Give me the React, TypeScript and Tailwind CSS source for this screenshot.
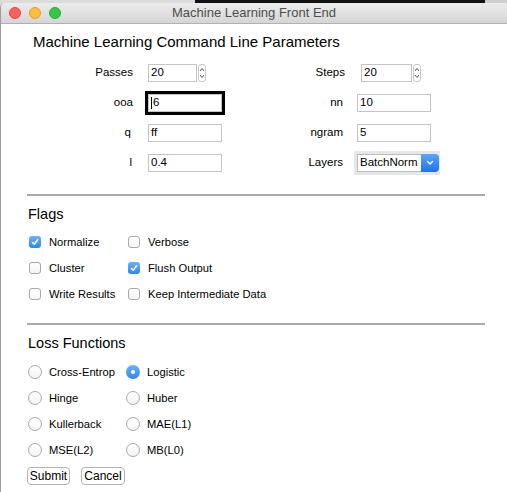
import React from 'react';

const Spinner = () => (
  <div className="ml-px flex h-[18px] w-[8px] items-center justify-center rounded-[3px] border border-[#c8c8c8] bg-white">
    <svg width="6" height="14" viewBox="0 0 6 14" fill="none" stroke="#555" strokeWidth="1">
      <path d="M1 5 L3 2.5 L5 5" />
      <path d="M1 9 L3 11.5 L5 9" />
    </svg>
  </div>
);

const Field = ({ value, w, focused, cursor }: { value: string; w: string; focused?: boolean; cursor?: boolean }) => (
  <div
    className={`flex h-[18px] items-center border border-[#c4c4c4] bg-white pl-[2px] text-[11.5px] leading-none text-black ${w} ${
      focused ? 'shadow-[0_0_0_3px_#000]' : ''
    }`}
  >
    {cursor && <span className="mr-px inline-block h-[12px] w-px bg-black" />}
    {value}
  </div>
);

const Checkbox = ({ checked, label }: { checked?: boolean; label: string }) => (
  <div className="flex h-[26px] items-center gap-[8px]">
    {checked ? (
      <div className="flex h-[12px] w-[12px] items-center justify-center rounded-[3px] bg-gradient-to-b from-[#6cb0fb] to-[#2c84f6]">
        <svg width="10" height="10" viewBox="0 0 10 10" fill="none" stroke="#fff" strokeWidth="1.6" strokeLinecap="round" strokeLinejoin="round">
          <path d="M2.5 5.5 L4.3 7.3 L7.6 2.8" />
        </svg>
      </div>
    ) : (
      <div className="h-[12px] w-[12px] rounded-[3px] border border-[#a9a9a9] bg-gradient-to-b from-white to-[#f4f4f4]" />
    )}
    <span className="text-[11.2px] text-black">{label}</span>
  </div>
);

const Radio = ({ checked, label }: { checked?: boolean; label: string }) => (
  <div className="flex h-[26px] items-center gap-[7px]">
    {checked ? (
      <div className="flex h-[14px] w-[14px] items-center justify-center rounded-full bg-gradient-to-b from-[#6cb0fb] to-[#2c84f6]">
        <div className="h-[4px] w-[4px] rounded-full bg-white" />
      </div>
    ) : (
      <div className="h-[14px] w-[14px] rounded-full border border-[#a9a9a9] bg-gradient-to-b from-white to-[#f4f4f4]" />
    )}
    <span className="text-[11.2px] text-black">{label}</span>
  </div>
);

const Label = ({ text, pr }: { text: string; pr: string }) => (
  <div className={`text-right text-[11.5px] text-black ${pr}`}>{text}</div>
);

export default function App() {
  return (
    <div className="flex h-[492px] w-[507px] flex-col overflow-hidden bg-[#d9d9d9] font-['Liberation_Sans',Arial,sans-serif]">
      <div className="flex h-[3px] shrink-0">
        <div className="w-[195px] bg-[#dcdcdc]" />
        <div className="flex-1 bg-[#111]" />
        <div className="w-[22px] bg-[#cfcfcf]" />
      </div>

      <div className="flex flex-1 flex-col overflow-hidden rounded-tl-[5px] border-l border-[#9c9c9c] bg-white">
        {/* title bar */}
        <div className="relative flex h-[21px] shrink-0 items-center gap-[8px] border-b border-[#b1b1b1] bg-gradient-to-b from-[#ececec] to-[#d5d5d5] pl-[8px]">
          <div className="h-[12px] w-[12px] rounded-full border border-[#e2463f] bg-[#fc605c]" />
          <div className="h-[12px] w-[12px] rounded-full border border-[#e1a116] bg-[#fdbc40]" />
          <div className="h-[12px] w-[12px] rounded-full border border-[#2aa83b] bg-[#34c84a]" />
          <div className="absolute inset-0 flex items-center justify-center text-[13px] text-[#4d4d4d]">
            Machine Learning Front End
          </div>
        </div>

        <div className="flex flex-col">
          <div className="ml-[32px] mt-[9px] h-[18px] text-[15px] leading-[18px] text-black">
            Machine Learning Command Line Parameters
          </div>

          {/* parameters */}
          <div className="mt-[7px] grid auto-rows-[30px] grid-cols-[147px_77px_132px_1fr] items-center">
            <Label text="Passes" pr="pr-[15px]" />
            <div className="flex">
              <Field value="20" w="w-[49px]" />
              <Spinner />
            </div>
            <Label text="Steps" pr="pr-[12px]" />
            <div className="ml-[4px] flex">
              <Field value="20" w="w-[51px]" />
              <Spinner />
            </div>

            <Label text="ooa" pr="pr-[15px]" />
            <Field value="6" w="w-[74px]" focused cursor />
            <Label text="nn" pr="pr-[14px]" />
            <Field value="10" w="w-[74px]" />

            <Label text="q" pr="pr-[17px]" />
            <Field value="ff" w="w-[74px]" />
            <Label text="ngram" pr="pr-[14px]" />
            <Field value="5" w="w-[74px]" />

            <Label text="l" pr="pr-[16px]" />
            <Field value="0.4" w="w-[74px]" />
            <Label text="Layers" pr="pr-[14px]" />
            <div className="-ml-[3px] flex w-[86px] bg-[#e7e7e7] py-[3px] pl-[3px] pr-[1px]">
              <div className="flex h-[18px] w-[64px] items-center border border-r-0 border-[#bdbdbd] bg-white pl-[2px] text-[11.5px] leading-none text-black">
                BatchNorm
              </div>
              <div className="flex h-[18px] w-[18px] items-center justify-center rounded-r-[4px] bg-gradient-to-b from-[#5aa5fb] to-[#1d72f3]">
                <svg width="8" height="6" viewBox="0 0 8 6" fill="none" stroke="#fff" strokeWidth="1.4" strokeLinecap="round" strokeLinejoin="round">
                  <path d="M1.5 1.5 L4 4 L6.5 1.5" />
                </svg>
              </div>
            </div>
          </div>

          <div className="ml-[26px] mt-[16px] h-[2px] w-[458px] bg-[#a9a9a9]" />

          {/* flags */}
          <div className="ml-[27px] mt-[9px] h-[18px] text-[14.5px] leading-[18px] text-black">Flags</div>
          <div className="ml-[28px] mt-[6px] grid grid-cols-[99px_1fr]">
            <Checkbox checked label="Normalize" />
            <Checkbox label="Verbose" />
            <Checkbox label="Cluster" />
            <Checkbox checked label="Flush Output" />
            <Checkbox label="Write Results" />
            <Checkbox label="Keep Intermediate Data" />
          </div>

          <div className="ml-[26px] mt-[16px] h-[2px] w-[458px] bg-[#a9a9a9]" />

          {/* loss functions */}
          <div className="ml-[27px] mt-[9px] h-[18px] text-[14.5px] leading-[18px] text-black">Loss Functions</div>
          <div className="ml-[27px] mt-[7px] grid grid-cols-[98px_1fr]">
            <Radio label="Cross-Entrop" />
            <Radio checked label="Logistic" />
            <Radio label="Hinge" />
            <Radio label="Huber" />
            <Radio label="Kullerback" />
            <Radio label="MAE(L1)" />
            <Radio label="MSE(L2)" />
            <Radio label="MB(L0)" />
          </div>

          <div className="ml-[26px] mt-[4px] flex gap-[11px]">
            <button className="flex h-[18px] w-[43px] items-center justify-center rounded-[4px] border border-[#b3b3b3] bg-white text-[12px] leading-none text-black">
              Submit
            </button>
            <button className="flex h-[18px] w-[44px] items-center justify-center rounded-[4px] border border-[#b3b3b3] bg-white text-[12px] leading-none text-black">
              Cancel
            </button>
          </div>
        </div>
      </div>
    </div>
  );
}
